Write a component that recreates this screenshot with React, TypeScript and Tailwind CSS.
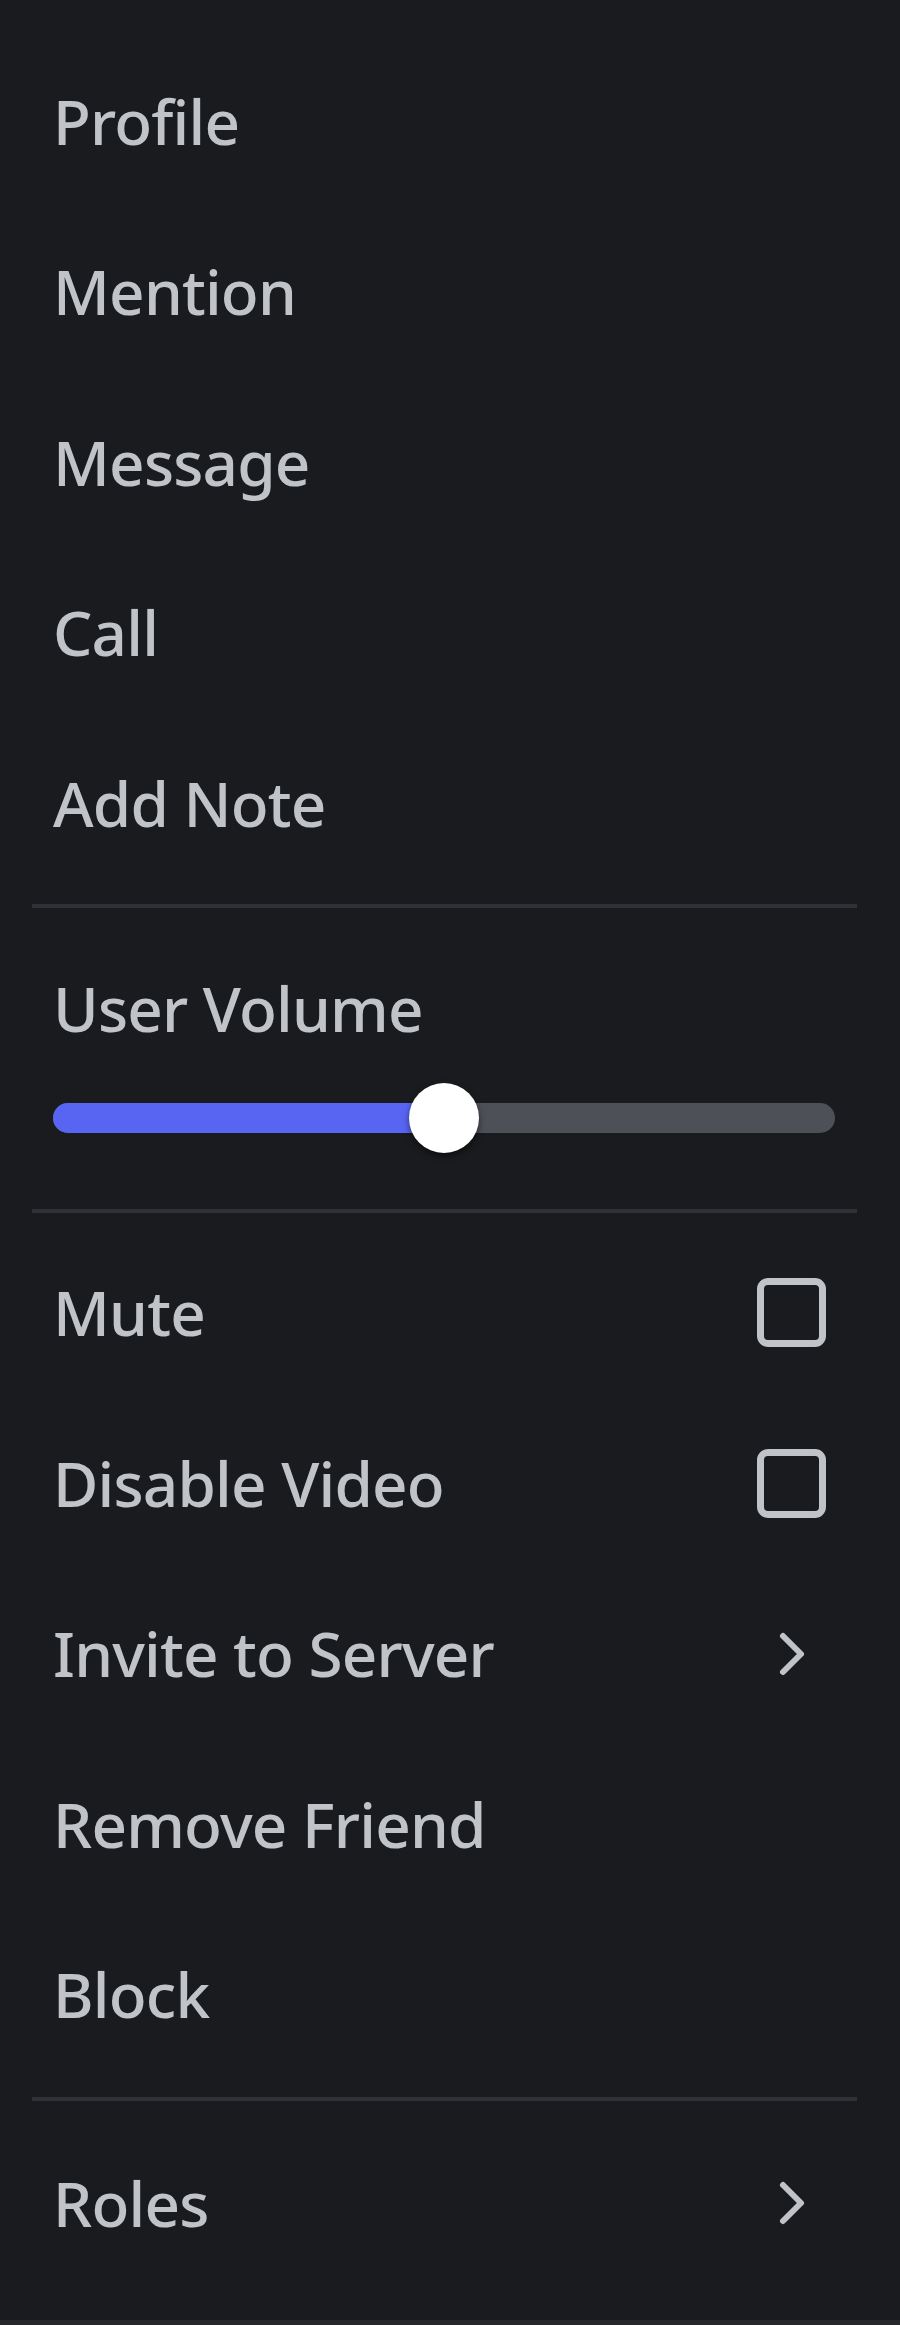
import { useState } from 'react'

type Item = { label: string; kind?: 'check' | 'sub' }

const top: Item[] = [
  { label: 'Profile' },
  { label: 'Mention' },
  { label: 'Message' },
  { label: 'Call' },
  { label: 'Add Note' },
]

const bottom: Item[] = [
  { label: 'Mute', kind: 'check' },
  { label: 'Disable Video', kind: 'check' },
  { label: 'Invite to Server', kind: 'sub' },
  { label: 'Remove Friend' },
  { label: 'Block' },
]

function Chevron() {
  return (
    <svg width="30" height="46" viewBox="0 0 30 46" fill="none">
      <path d="M6 5 L24 23 L6 41" stroke="#c0c3c8" strokeWidth="6" strokeLinecap="round" strokeLinejoin="round" />
    </svg>
  )
}

function Row({ item }: { item: Item }) {
  return (
    <div className="flex h-[170.5px] items-center justify-between pl-[21px] pr-[31px]">
      <span>{item.label}</span>
      {item.kind === 'check' && (
        <span className="h-[69px] w-[69px] rounded-[11px] border-[7px] border-[#c0c3c8]" />
      )}
      {item.kind === 'sub' && (
        <span className="flex h-[69px] w-[69px] items-center justify-center">
          <Chevron />
        </span>
      )}
    </div>
  )
}

function Divider({ wide }: { wide?: boolean }) {
  return <div className={wide ? 'my-[17px] h-[4px] bg-[#303136]' : 'my-[15px] h-[4px] bg-[#303136]'} />
}

export default function App() {
  const [volume] = useState(50)

  return (
    <div className="flex h-[2325px] flex-col bg-[#1a1b1e] font-['Noto_Sans',sans-serif] text-[62px] font-medium tracking-[-0.8px] text-[#c0c3c8]">
      <div className="flex-1 pl-[32px] pr-[43px] pt-[36px]">
        {top.map((i) => (
          <Row key={i.label} item={i} />
        ))}
        <Divider />

        <div className="h-[271px] pt-[37px]">
          <div className="pl-[21px] leading-[96px]">User Volume</div>
          <div className="mt-[27px] flex h-[70px] items-center pl-[21px] pr-[22px]">
            <div className="relative h-[30px] w-full rounded-full bg-[#4e5058]">
              <div className="h-full rounded-full bg-[#5865f2]" style={{ width: `${volume}%` }} />
              <div
                className="absolute top-1/2 h-[70px] w-[70px] -translate-x-1/2 -translate-y-1/2 rounded-full bg-white shadow-[0_3px_6px_rgba(0,0,0,0.5)]"
                style={{ left: `${volume}%` }}
              />
            </div>
          </div>
        </div>

        <Divider />
        {bottom.map((i) => (
          <Row key={i.label} item={i} />
        ))}
        <Divider wide />
        <Row item={{ label: 'Roles', kind: 'sub' }} />
      </div>
      <div className="h-[5px] bg-[#26272b]" />
    </div>
  )
}
